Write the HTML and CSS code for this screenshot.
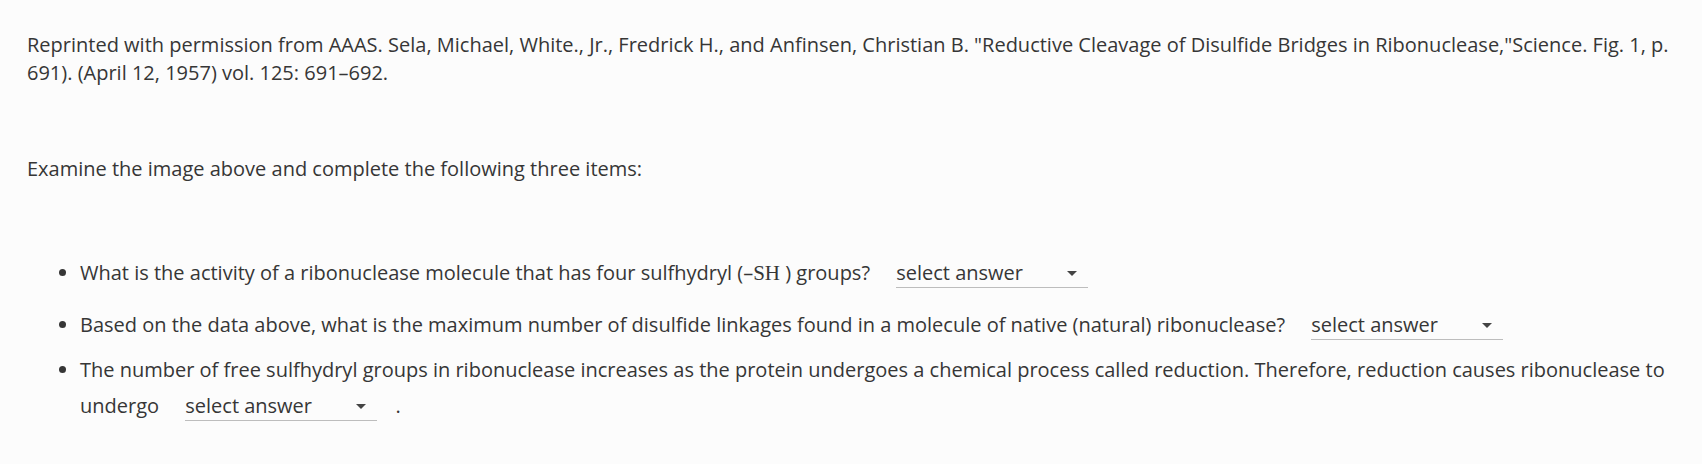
FILE: index.html
```html
<!DOCTYPE html>
<html lang="en">
<head>
<meta charset="utf-8">
<title>Ribonuclease items</title>
<link rel="stylesheet" href="styles.css">
</head>
<body>
<main class="page">
  <p class="citation">Reprinted with permission from AAAS. Sela, Michael, White., Jr., Fredrick H., and Anfinsen, Christian B. "Reductive Cleavage of Disulfide Bridges in Ribonuclease,"Science. Fig. 1, p. 691). (April 12, 1957) vol. 125: 691–692.</p>
  <p class="instructions">Examine the image above and complete the following three items:</p>
  <ul class="items">
    <li class="item item-math">What is the activity of a ribonuclease molecule that has four sulfhydryl (<span class="math">–<span class="math-var">SH</span></span> ) groups? <span class="dropdown"><span class="dropdown-label">select answer</span><svg class="dropdown-arrow" width="10" height="5" viewBox="0 0 10 5"><path d="M0 0h10L5 5z" fill="#444"/></svg></span></li>
    <li class="item">Based on the data above, what is the maximum number of disulfide linkages found in a molecule of native (natural) ribonuclease? <span class="dropdown"><span class="dropdown-label">select answer</span><svg class="dropdown-arrow" width="10" height="5" viewBox="0 0 10 5"><path d="M0 0h10L5 5z" fill="#444"/></svg></span></li>
    <li class="item">The number of free sulfhydryl groups in ribonuclease increases as the protein undergoes a chemical process called reduction. Therefore, reduction causes ribonuclease to undergo <span class="dropdown dropdown-inline"><span class="dropdown-label">select answer</span><svg class="dropdown-arrow" width="10" height="5" viewBox="0 0 10 5"><path d="M0 0h10L5 5z" fill="#444"/></svg></span> .</li>
  </ul>
</main>
</body>
</html>
```

FILE: styles.css
```css
html, body {
  margin: 0;
  padding: 0;
  background: #fcfcfc;
}

body {
  font-family: "Open Sans", "Noto Sans", sans-serif;
  font-size: 20px;
  color: #363636;
}

.page {
  padding: 31px 27px 0 27px;
}

.citation {
  margin: 0;
  line-height: 28px;
}

.instructions {
  margin: 68px 0 0 0;
  line-height: 28px;
}

.items {
  margin: 72px 0 0 0;
  padding: 0 0 0 53px;
  line-height: 36px;
}

.item {
  margin: 0 0 9px 0;
}

.item-math {
  margin-bottom: 16px;
}

.math-var {
  font-family: "Liberation Serif", "DejaVu Serif", serif;
  font-size: 21px;
}

.dropdown {
  display: inline-flex;
  align-items: baseline;
  justify-content: space-between;
  box-sizing: border-box;
  width: 192px;
  margin-left: 21px;
  line-height: 28px;
  border-bottom: 1px solid #bdbdbd;
  vertical-align: baseline;
}

.dropdown-inline {
  margin-right: 13px;
}

.dropdown-arrow {
  align-self: center;
  margin-right: 11px;
}
```
